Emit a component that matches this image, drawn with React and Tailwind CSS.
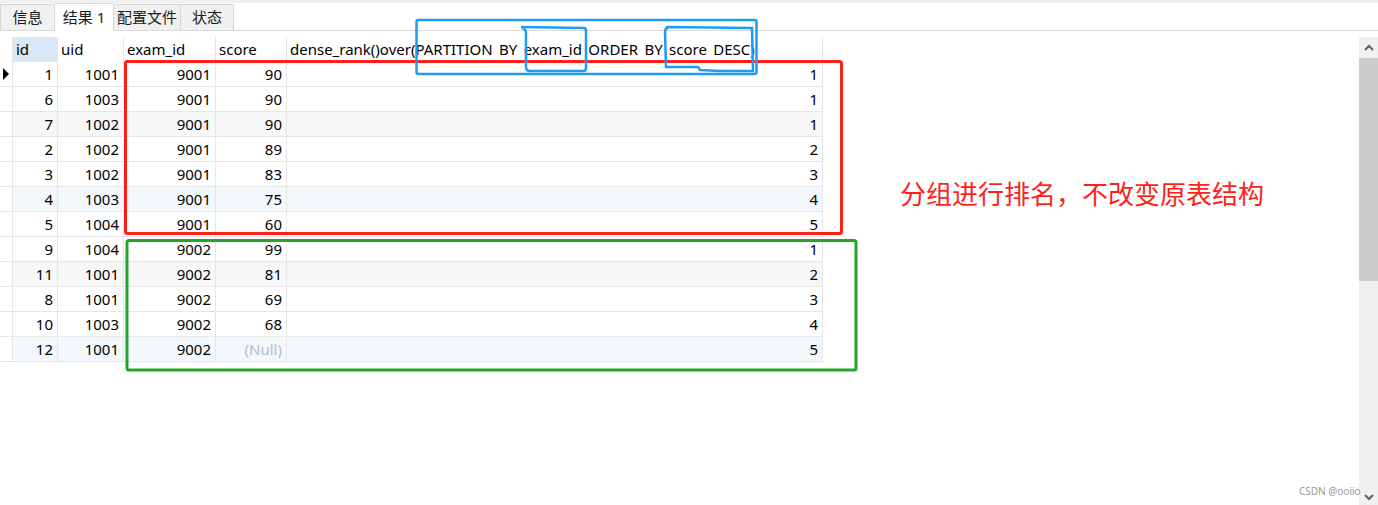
import React from "react";

const rows = [
  { id: 1, uid: 1001, exam: 9001, score: "90", r: 1, bg: "bg-white", mark: true },
  { id: 6, uid: 1003, exam: 9001, score: "90", r: 1, bg: "bg-white" },
  { id: 7, uid: 1002, exam: 9001, score: "90", r: 1, bg: "bg-[#f7f7f7]" },
  { id: 2, uid: 1002, exam: 9001, score: "89", r: 2, bg: "bg-white" },
  { id: 3, uid: 1002, exam: 9001, score: "83", r: 3, bg: "bg-white" },
  { id: 4, uid: 1003, exam: 9001, score: "75", r: 4, bg: "bg-[#f3f8fd]" },
  { id: 5, uid: 1004, exam: 9001, score: "60", r: 5, bg: "bg-white" },
  { id: 9, uid: 1004, exam: 9002, score: "99", r: 1, bg: "bg-white" },
  { id: 11, uid: 1001, exam: 9002, score: "81", r: 2, bg: "bg-[#f7f7f7]" },
  { id: 8, uid: 1001, exam: 9002, score: "69", r: 3, bg: "bg-white" },
  { id: 10, uid: 1003, exam: 9002, score: "68", r: 4, bg: "bg-white" },
  { id: 12, uid: 1001, exam: 9002, score: null, r: 5, bg: "bg-[#f3f8fd]" },
];

const cell = "h-[25px] border-r border-b border-[#e6e6e6] flex items-center";

export default function App() {
  return (
    <div
      className="relative w-[1378px] h-[505px] overflow-hidden bg-white text-black"
      style={{ fontFamily: '"Noto Sans", "Noto Sans CJK SC", sans-serif' }}
    >
      <div className="h-[3px] bg-[#f0f0f0]" />
      <div className="h-[28px] flex items-stretch border-b border-[#d9d9d9]">
        <div className="flex items-stretch pt-[1px] h-full">
          <div className="w-[55px] h-full flex items-center justify-center bg-[#f0f0f0] border border-b-0 border-[#d6d6d6]">
            <span className="text-[15px] leading-none text-[#1a1a1a]">信息</span>
          </div>
          <div className="w-[58px] h-[28px] -mt-[1px] flex items-center justify-center bg-white border-t border-[#d6d6d6]">
            <span className="text-[15px] leading-none text-[#1a1a1a]">结果 1</span>
          </div>
          <div className="w-[68px] h-full flex items-center justify-center bg-[#f0f0f0] border border-b-0 border-[#d6d6d6]">
            <span className="text-[15px] leading-none text-[#1a1a1a]">配置文件</span>
          </div>
          <div className="w-[53px] h-full flex items-center justify-center bg-[#f0f0f0] border border-l-0 border-b-0 border-[#d6d6d6]">
            <span className="text-[15px] leading-none text-[#1a1a1a]">状态</span>
          </div>
        </div>
      </div>
      <div className="flex h-[474px] pt-[6px]">
        <div className="flex-1">
          {/* header */}
          <div className="flex text-[15px]">
            <div className="w-[13px] h-[25px] border-r border-[#e6e6e6]" />
            <div className="w-[45px] h-[25px] border-r border-[#e6e6e6] bg-[#d9e8f6] flex items-center pl-[3px]">id</div>
            <div className="w-[66px] h-[25px] border-r border-[#e6e6e6] flex items-center pl-[3px]">uid</div>
            <div className="w-[92px] h-[25px] border-r border-[#e6e6e6] flex items-center pl-[3px]">exam_id</div>
            <div className="w-[71px] h-[25px] border-r border-[#e6e6e6] flex items-center pl-[3px]">score</div>
            <div className="w-[536px] h-[25px] border-r border-[#e6e6e6] flex items-center pl-[3px] whitespace-nowrap overflow-hidden [word-spacing:2.5px]">
              dense_rank()over(PARTITION BY exam_id ORDER BY score DESC)
            </div>
          </div>
          {rows.map((r) => (
            <div key={r.id} className="flex text-[15px]">
              <div className={"w-[13px] bg-white justify-center " + cell}>
                {r.mark && (
                  <svg width="6" height="12" viewBox="0 0 6 12">
                    <path d="M0 0 L6 6 L0 12 Z" fill="#000" />
                  </svg>
                )}
              </div>
              <div className={"w-[45px] justify-end pr-[4px] " + cell + " " + r.bg}>{r.id}</div>
              <div className={"w-[66px] justify-end pr-[4px] " + cell + " " + r.bg}>{r.uid}</div>
              <div className={"w-[92px] justify-end pr-[4px] " + cell + " " + r.bg}>{r.exam}</div>
              <div className={"w-[71px] justify-end pr-[4px] " + cell + " " + r.bg}>
                {r.score === null ? <span className="text-[#b3bccb]">(Null)</span> : r.score}
              </div>
              <div className={"w-[536px] justify-end pr-[4px] " + cell + " " + r.bg}>{r.r}</div>
            </div>
          ))}
        </div>
        {/* scrollbar */}
        <div className="w-[19px] flex flex-col bg-[#f0f0f0]">
          <div className="h-[21px] flex items-center justify-center">
            <svg width="10" height="7" viewBox="0 0 10 7">
              <path d="M1 6 L5 2 L9 6" stroke="#606060" strokeWidth="2" fill="none" />
            </svg>
          </div>
          <div className="h-[223px] bg-[#cdcdcd]" />
          <div className="flex-1" />
          <div className="h-[16px] flex items-center justify-center">
            <svg width="10" height="7" viewBox="0 0 10 7">
              <path d="M1 1 L5 5 L9 1" stroke="#606060" strokeWidth="2" fill="none" />
            </svg>
          </div>
        </div>
      </div>

      {/* annotations */}
      <svg className="absolute left-0 top-0 pointer-events-none" width="1378" height="505">
        <rect x="125.5" y="61.5" width="716" height="172" rx="2" fill="none" stroke="#ff1f1a" strokeWidth="3" />
        <rect x="127" y="240.5" width="729" height="129.5" rx="2" fill="none" stroke="#22a52a" strokeWidth="3" />
        <rect x="416.5" y="20" width="340" height="54" rx="2" fill="none" stroke="#1f9bf3" strokeWidth="2.5" />
        <path
          d="M521 27 L584 28 Q586 28 586 31 L586 68 Q586 71 583 71 L530 71 Q526 71 526 67 L526 33 Q526 29 522 28"
          fill="none"
          stroke="#1f9bf3"
          strokeWidth="2.5"
        />
        <path
          d="M666 27 L752 28 L753 71 L720 71 L700 70 L698 67 L666 67 L665 32 Q665 28 668 28"
          fill="none"
          stroke="#1f9bf3"
          strokeWidth="2.5"
        />
      </svg>
      <div className="absolute left-[900px] top-[178px] text-[26px] leading-[30px] text-[#ff1f1a] whitespace-nowrap"
        style={{ fontFamily: '"Noto Sans CJK SC", sans-serif' }}>
        分组进行排名，不改变原表结构
      </div>
      <div className="absolute left-[1299px] top-[484px] text-[10px] text-[#999999] whitespace-nowrap">
        CSDN @ooiio
      </div>
    </div>
  );
}
